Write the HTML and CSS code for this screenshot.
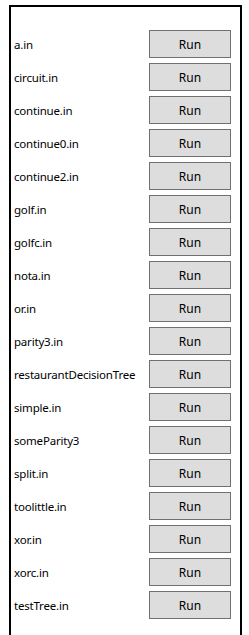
FILE: index.html
```html
<!DOCTYPE html>
<html lang="en">
<head>
  <meta charset="UTF-8" />
  <title>Decision Tree Tests</title>
  <link rel="stylesheet" href="styles.css">
</head>
<body>
  <div class="panel">
    <div class="test-list">
      <span class="test-name">a.in</span><button class="run-btn">Run</button>
      <span class="test-name">circuit.in</span><button class="run-btn">Run</button>
      <span class="test-name">continue.in</span><button class="run-btn">Run</button>
      <span class="test-name">continue0.in</span><button class="run-btn">Run</button>
      <span class="test-name">continue2.in</span><button class="run-btn">Run</button>
      <span class="test-name">golf.in</span><button class="run-btn">Run</button>
      <span class="test-name">golfc.in</span><button class="run-btn">Run</button>
      <span class="test-name">nota.in</span><button class="run-btn">Run</button>
      <span class="test-name">or.in</span><button class="run-btn">Run</button>
      <span class="test-name">parity3.in</span><button class="run-btn">Run</button>
      <span class="test-name">restaurantDecisionTree</span><button class="run-btn">Run</button>
      <span class="test-name">simple.in</span><button class="run-btn">Run</button>
      <span class="test-name">someParity3</span><button class="run-btn">Run</button>
      <span class="test-name">split.in</span><button class="run-btn">Run</button>
      <span class="test-name">toolittle.in</span><button class="run-btn">Run</button>
      <span class="test-name">xor.in</span><button class="run-btn">Run</button>
      <span class="test-name">xorc.in</span><button class="run-btn">Run</button>
      <span class="test-name">testTree.in</span><button class="run-btn">Run</button>
    </div>
  </div>
</body>
</html>
```

FILE: styles.css
```css
body {
  font-family: "Noto Sans", "Open Sans", sans-serif;
  font-size: 11.5px;
  letter-spacing: -0.2px;
  background: white;
  color: black;
  margin: 0;
  padding: 0;
  overflow: hidden;
}

.panel {
  margin: 5px 0 0 9px;
  width: 233px;
  height: 660px;
  border: 2px solid black;
  box-sizing: border-box;
  padding: 23px 9px 0 3px;
}

.test-list {
  display: grid;
  grid-template-columns: 1fr 82px;
  grid-auto-rows: 28px;
  row-gap: 5px;
  align-items: center;
}

.test-name {
  white-space: nowrap;
}

.run-btn {
  height: 28px;
  background-color: #dddddd;
  border: 1px solid #707070;
  color: black;
  font-family: inherit;
  font-size: 12px;
  letter-spacing: 0;
  padding: 0;
  border-radius: 0;
}
```
